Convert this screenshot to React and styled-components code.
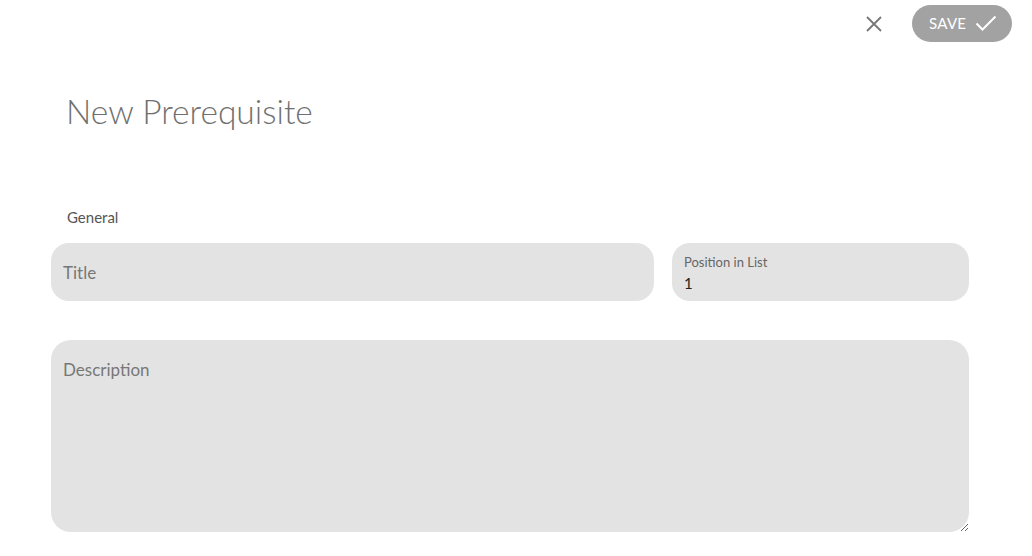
import React from 'react';
import styled, { createGlobalStyle } from 'styled-components';

const GlobalStyle = createGlobalStyle`
    body {
        margin:0;
        background:white;
        font-family:Lato, "Open Sans", sans-serif;
    }
`

const Page = styled.div`
    width:1032px;
    min-height:556px;
`

const Toolbar = styled.div`
    display:flex;
    justify-content:flex-end;
    align-items:center;
    gap:30px;
    padding:5px 20px 0 0;
`

const CloseButton = styled.button`
    border:none;
    background:none;
    padding:0;
    width:16px;
    height:16px;
    display:flex;
    cursor:pointer;
`

const SaveButton = styled.button`
    display:flex;
    align-items:center;
    gap:9px;
    height:37px;
    width:100px;
    padding:0 0 1px 17px;
    border:none;
    border-radius:19px;
    background:#a2a2a2;
    color:white;
    font-family:Lato, sans-serif;
    font-size:15px;
    letter-spacing:0.3px;
    cursor:pointer;
`

const Heading = styled.h1`
    margin:49px 0 0 66px;
    font-size:33.5px;
    font-weight:300;
    color:#707070;
    line-height:40px;
`

const Form = styled.div`
    margin:77px 0 0 51px;
    width:918px;
`

const SectionLabel = styled.div`
    margin-left:16px;
    font-size:15px;
    color:#555;
    line-height:18px;
`

const Row = styled.div`
    display:flex;
    gap:18px;
    margin-top:17px;
`

const Field = styled.div`
    box-sizing:border-box;
    width:${props => props.w}px;
    height:58px;
    border-radius:18px;
    background:#e3e3e3;
    display:flex;
    flex-direction:column;
    justify-content:center;
    padding:0 12px;
`

const TextInput = styled.input`
    border:none;
    background:none;
    outline:none;
    padding:0;
    font-family:Lato, sans-serif;
    font-size:17px;
    color:#222;
    &::placeholder { color:#777; }
`

const SmallLabel = styled.label`
    font-size:13px;
    color:#666;
    line-height:16px;
    margin-top:2px;
`

const ValueInput = styled(TextInput)`
    font-size:15px;
    margin-top:4px;
`

const TextArea = styled.textarea`
    display:block;
    box-sizing:border-box;
    width:918px;
    height:192px;
    margin-top:39px;
    border:none;
    border-radius:20px;
    background:#e3e3e3;
    padding:19px 12px;
    outline:none;
    font-family:Lato, sans-serif;
    font-size:17px;
    color:#222;
    &::placeholder { color:#777; }
`

const App = () => {
    return (
        <Page>
            <GlobalStyle/>
            <Toolbar>
                <CloseButton aria-label="Close">
                    <svg width="16" height="16" viewBox="0 0 16 16">
                        <path d="M1 1L15 15M15 1L1 15" stroke="#777" strokeWidth="1.8" fill="none"/>
                    </svg>
                </CloseButton>
                <SaveButton>
                    SAVE
                    <svg width="22" height="16" viewBox="0 0 22 16">
                        <path d="M1.5 8.5L7.5 14.5L20.5 1.5" stroke="white" strokeWidth="2" fill="none"/>
                    </svg>
                </SaveButton>
            </Toolbar>
            <Heading>New Prerequisite</Heading>
            <Form>
                <SectionLabel>General</SectionLabel>
                <Row>
                    <Field w={603}>
                        <TextInput placeholder="Title"/>
                    </Field>
                    <Field w={297}>
                        <SmallLabel>Position in List</SmallLabel>
                        <ValueInput defaultValue="1"/>
                    </Field>
                </Row>
                <TextArea placeholder="Description"/>
            </Form>
        </Page>
    );
}

export default App;
